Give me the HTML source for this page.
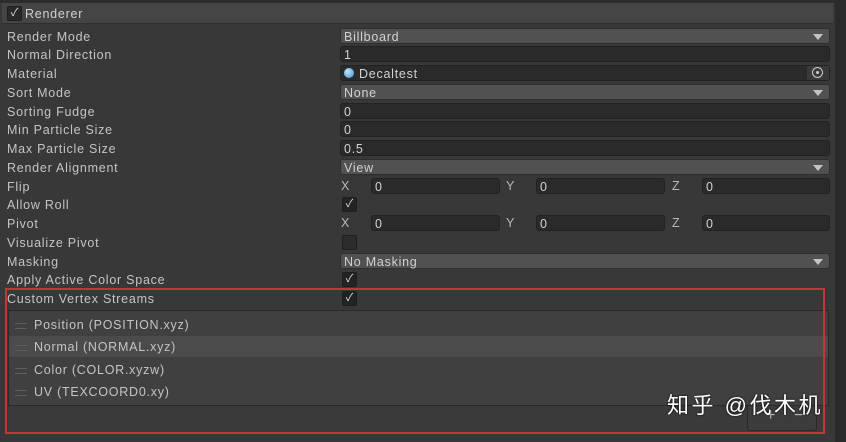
<!DOCTYPE html>
<html><head><style>
body{margin:0;width:846px;height:442px;background:#383838;font-family:"Liberation Sans","Noto Sans CJK SC",sans-serif;font-size:12.5px;letter-spacing:0.75px;color:#c4c4c4;position:relative;overflow:hidden}
.a{position:absolute}
.lbl{position:absolute;left:7px;line-height:18px;margin-top:1px}
.f{position:absolute;height:16px;border-radius:3px;box-sizing:border-box;padding-left:3px;line-height:16px;color:#d2d2d2}
.dd{background:#515151;border:1px solid #2e2e2e}
.tx{background:#2a2a2a;border:1px solid #222}
.arr{position:absolute;right:6px;top:5px;width:0;height:0;border-left:5px solid transparent;border-right:5px solid transparent;border-top:6px solid #c4c4c4}
.cb{position:absolute;left:342px;width:13px;height:13px;background:#232323;border:1px solid #1e1e1e;border-radius:2px;color:#ddd;font-size:11px;line-height:13px;text-align:center;letter-spacing:0}
.ax{position:absolute;line-height:18px;color:#b8b8b8}
.it{position:absolute;left:34px;line-height:18px;color:#c4c4c4;margin-top:1px}
.hd{position:absolute;left:15px;width:12px;height:4px;border-top:1px solid #5e5e5e;border-bottom:1px solid #5e5e5e}
</style></head><body>
<div class="a" style="left:835px;top:0;width:11px;height:442px;background:#2a2a2a"></div>
<div class="a" style="left:0;top:0;width:835px;height:3px;background:#2c2c2c"></div>
<div class="a" style="left:2px;top:3px;width:831px;height:20px;background:#454545;border-bottom:1px solid #2e2e2e"></div>
<div class="cb" style="left:7px;top:6px;background:#2a2a2a">✓</div>
<div class="lbl" style="left:25px;top:4px;color:#d0d0d0">Renderer</div>

<div class="lbl" style="top:27px">Render Mode</div>
<div class="f dd" style="left:340px;top:28px;width:490px">Billboard<div class="arr"></div></div>
<div class="lbl" style="top:45px">Normal Direction</div>
<div class="f tx" style="left:340px;top:46px;width:490px">1</div>
<div class="lbl" style="top:64px">Material</div>
<div class="f tx" style="left:340px;top:65px;width:490px;padding-left:18px">Decaltest
<div class="a" style="left:3px;top:2px;width:10px;height:10px;border-radius:50%;background:radial-gradient(circle at 35% 35%,#bfe8ff,#3a8ec8)"></div>
<div class="a" style="right:0;top:0;width:22px;height:14px;background:#3a3a3a"><div class="a" style="left:5px;top:1px;width:9px;height:9px;border:1.5px solid #ccc;border-radius:50%"></div><div class="a" style="left:9px;top:5px;width:3px;height:3px;background:#ccc;border-radius:50%"></div></div></div>
<div class="lbl" style="top:83px">Sort Mode</div>
<div class="f dd" style="left:340px;top:84px;width:490px">None<div class="arr"></div></div>
<div class="lbl" style="top:102px">Sorting Fudge</div>
<div class="f tx" style="left:340px;top:103px;width:490px">0</div>
<div class="lbl" style="top:120px">Min Particle Size</div>
<div class="f tx" style="left:340px;top:121px;width:490px">0</div>
<div class="lbl" style="top:139px">Max Particle Size</div>
<div class="f tx" style="left:340px;top:140px;width:490px">0.5</div>
<div class="lbl" style="top:158px">Render Alignment</div>
<div class="f dd" style="left:340px;top:159px;width:490px">View<div class="arr"></div></div>
<div class="lbl" style="top:177px">Flip</div>
<div class="ax" style="left:341px;top:177px">X</div><div class="f tx" style="left:371px;top:178px;width:129px">0</div>
<div class="ax" style="left:506px;top:177px">Y</div><div class="f tx" style="left:536px;top:178px;width:129px">0</div>
<div class="ax" style="left:672px;top:177px">Z</div><div class="f tx" style="left:702px;top:178px;width:128px">0</div>
<div class="lbl" style="top:195px">Allow Roll</div>
<div class="cb" style="top:197px">✓</div>
<div class="lbl" style="top:214px">Pivot</div>
<div class="ax" style="left:341px;top:214px">X</div><div class="f tx" style="left:371px;top:215px;width:129px">0</div>
<div class="ax" style="left:506px;top:214px">Y</div><div class="f tx" style="left:536px;top:215px;width:129px">0</div>
<div class="ax" style="left:672px;top:214px">Z</div><div class="f tx" style="left:702px;top:215px;width:128px">0</div>
<div class="lbl" style="top:233px">Visualize Pivot</div>
<div class="cb" style="top:235px;background:#2c2c2c"></div>
<div class="lbl" style="top:252px">Masking</div>
<div class="f dd" style="left:340px;top:253px;width:490px">No Masking<div class="arr"></div></div>
<div class="lbl" style="top:270px">Apply Active Color Space</div>
<div class="cb" style="top:272px">✓</div>
<div class="lbl" style="top:289px">Custom Vertex Streams</div>
<div class="cb" style="top:291px">✓</div>

<div class="a" style="left:8px;top:310px;width:821px;height:96px;background:#404040;border:1px solid #2a2a2a;box-sizing:border-box"></div>
<div class="a" style="left:9px;top:336px;width:819px;height:21px;background:#4b4b4b"></div>
<div class="a" style="left:8px;top:406px;width:821px;height:28px;background:#3a3a3a"></div>
<div class="hd" style="top:323px"></div><div class="it" style="top:315px">Position (POSITION.xyz)</div>
<div class="hd" style="top:345px"></div><div class="it" style="top:337px">Normal (NORMAL.xyz)</div>
<div class="hd" style="top:368px"></div><div class="it" style="top:360px">Color (COLOR.xyzw)</div>
<div class="hd" style="top:390px"></div><div class="it" style="top:382px">UV (TEXCOORD0.xy)</div>
<div class="a" style="left:747px;top:406px;width:68px;height:24px;background:#3c3c3c;border:1px solid #2a2a2a;border-top:none;border-radius:0 0 3px 3px;color:#bbb;font-size:16px;line-height:20px"><span style="position:absolute;left:18px">+</span><span style="position:absolute;left:46px">−</span></div>
<div class="a" style="left:5px;top:288px;width:820px;height:146px;border:2px solid #c8323a;box-sizing:border-box"></div>
<div class="a" style="left:667px;top:392px;color:#fff;font-size:22px;letter-spacing:2.5px;line-height:28px;text-shadow:0 0 2px #000">知乎 @伐木机</div>
</body></html>
